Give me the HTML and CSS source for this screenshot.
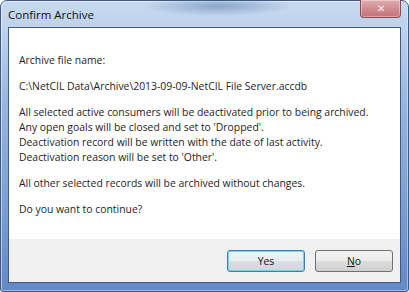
FILE: index.html
```html
<!DOCTYPE html>
<html lang="en">
<head>
    <meta charset="UTF-8">
    <title>Confirm Archive</title>
    <link rel="stylesheet" href="styles.css">
</head>
<body>
    <div class="window">
        <header class="titlebar">
            <span class="title">Confirm Archive</span>
            <button class="btn-close">&#x2715;</button>
        </header>

        <div class="client">
            <div class="message">
                <p>Archive file name:</p>
                <p>C:\NetCIL Data\Archive\2013-09-09-NetCIL File Server.accdb</p>
                <p>
                    All selected active consumers will be deactivated prior to being archived.<br>
                    Any open goals will be closed and set to 'Dropped'.<br>
                    Deactivation record will be written with the date of last activity.<br>
                    Deactivation reason will be set to 'Other'.
                </p>
                <p>All other selected records will be archived without changes.</p>
                <p>Do you want to continue?</p>
            </div>

            <div class="buttons">
                <button class="btn btn-default">Yes</button>
                <button class="btn"><u>N</u>o</button>
            </div>
        </div>
    </div>
</body>
</html>
```

FILE: styles.css
```css
* {
    margin: 0;
    padding: 0;
    box-sizing: border-box;
}

body {
    font-family: 'Open Sans', 'Noto Sans', sans-serif;
    background-color: #fff;
    color: #1e1e1e;
}

.window {
    width: 409px;
    height: 292px;
    display: flex;
    flex-direction: column;
    padding: 0 7px 8px 7px;
    border: 1px solid #3d5a86;
    border-radius: 7px 7px 3px 3px;
    background: linear-gradient(to bottom, #c6d9ee 0%, #bdd3ec 10%, #97b6df 35%, #7b9fd2 70%, #6389c6 100%);
    box-shadow: inset 1px 1px 0 rgba(255, 255, 255, 0.5), inset -1px -1px 0 rgba(255, 255, 255, 0.4);
    /* glass frame, darker toward the bottom */
}

.titlebar {
    height: 26px;
    display: flex;
    align-items: flex-start;
    justify-content: space-between;
    background: radial-gradient(ellipse 75px 10px at 210px 5px, rgba(70, 105, 160, 0.45), transparent);
}

.title {
    font-size: 11.5px;
    color: #111;
    padding-top: 6px;
}

.btn-close {
    width: 41px;
    height: 18px;
    margin-top: -1px;
    border: 1px solid #8c4b50;
    border-top: none;
    border-radius: 0 0 4px 4px;
    background: linear-gradient(to bottom, #dfaeb1 0%, #cf8d92 50%, #c27279 100%);
    color: #eed8da;
    font-size: 10px;
    font-weight: bold;
    box-shadow: inset 0 0 0 1px rgba(255, 255, 255, 0.35);
}

.client {
    flex: 1;
    display: flex;
    flex-direction: column;
    border: 1px solid #3e5a85;
    background-color: #f0f0f0;
}

.message {
    flex: 1;
    background-color: #fff;
    padding: 25px 10px 0 10px;
    font-size: 10.4px;
    line-height: 15px;
    white-space: nowrap;
}

.message p {
    margin-bottom: 11px;
}

.buttons {
    height: 43px;
    display: flex;
    justify-content: flex-end;
    align-items: flex-start;
    gap: 10px;
    padding: 11px 7px 0 0;
}

.btn {
    width: 78px;
    height: 22px;
    border: 1px solid #707070;
    border-radius: 3px;
    background: linear-gradient(to bottom, #f2f2f2 0%, #ebebeb 50%, #dddddd 51%, #cfcfcf 100%);
    font-family: 'Open Sans', 'Noto Sans', sans-serif;
    font-size: 10.4px;
    color: #111;
}

.btn-default {
    border-color: #3c7fb1;
    box-shadow: inset 0 0 0 1px #6fd3f0;
    background: linear-gradient(to bottom, #f0f4f7 0%, #e6ecf0 50%, #d8e0e6 51%, #cdd7de 100%);
}
```
